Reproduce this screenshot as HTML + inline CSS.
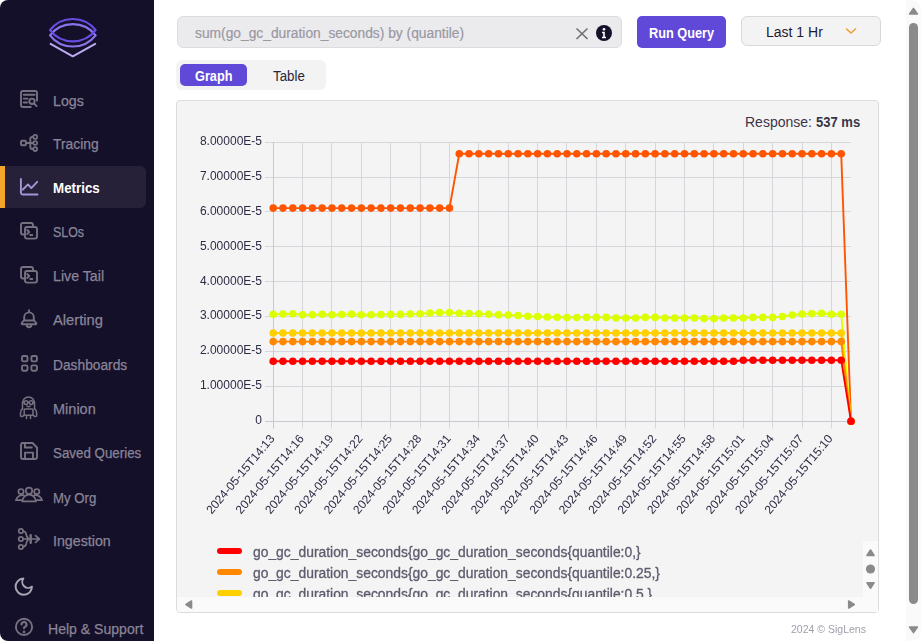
<!DOCTYPE html>
<html><head><meta charset="utf-8">
<style>
*{box-sizing:border-box}
html,body{margin:0;padding:0;width:921px;height:641px;overflow:hidden;background:#fff;font-family:"Liberation Sans",sans-serif}
.abs{position:absolute}
#side{position:absolute;left:0;top:0;width:154px;height:641px;background:#15102a;border-radius:8px 0 0 8px}
.nav{position:absolute;left:52.7px;font-size:15.5px;color:#8a8598;-webkit-text-stroke:0.25px #8a8598;white-space:nowrap;line-height:16px;transform:scaleX(0.872);transform-origin:0 0}
.ico{position:absolute;left:18px;width:22px;height:22px}
.ico *{fill:none;stroke:#7a7585;stroke-width:1.5;stroke-linecap:round;stroke-linejoin:round}
#active{position:absolute;left:5px;top:166px;width:141px;height:42px;background:#262139;border-radius:0 6px 6px 0}
#abar{position:absolute;left:0;top:166px;width:5px;height:42px;background:#f2a72c}
.yl{font-family:"Liberation Sans",sans-serif;font-size:12px;fill:#2e2b45}
.xl{font-family:"Liberation Sans",sans-serif;font-size:12px;fill:#2e2b45}
</style></head><body>
<div id="side">
  <svg class="abs" style="left:0;top:0" width="154" height="70">
    <g fill="none" stroke-width="2.2" stroke-linejoin="round" stroke-linecap="round">
    <path d="M50,35.3 A28.8,28.8 0 0 1 95.6,35.3 A28.8,28.8 0 0 1 50,35.3Z" stroke="#8b74ea"/>
    <path d="M50,30.2 A28.8,28.8 0 0 1 95.6,30.2 A28.8,28.8 0 0 1 50,30.2Z" stroke="#6a4ce4"/>
    <path d="M50.6,43.9 L72.8,56.3 L95.2,43.9" stroke="#bba9f2" stroke-width="2"/>
    </g>
  </svg>
  <div id="abar"></div><div id="active"></div>
  <svg class="abs" style="left:0;top:0" width="154" height="641">
   <g fill="none" stroke="#77717f" stroke-width="1.9" stroke-linecap="round" stroke-linejoin="round">
    <path d="M30.8,107 H23 a2,2 0 0 1 -2,-2 V93 a2,2 0 0 1 2,-2 H35 a2,2 0 0 1 2,2 V100.5"/>
    <path d="M23.8,94.7 H34.6 M23.8,98.6 H27.6 M23.8,102.5 H27"/>
    <circle cx="32" cy="101.3" r="2.7"/><path d="M34.2,103.6 L36.6,106.1"/>
    <rect x="21" y="140.8" width="4.9" height="4.4" rx="1"/>
    <path d="M26,143 H33 M33,136.9 H32.3 a2,2 0 0 0 -2,2 V147 a2,2 0 0 0 2,2 H33"/>
    <circle cx="35.2" cy="136.9" r="1.95" stroke-width="1.7"/><circle cx="35.2" cy="143" r="1.95" stroke-width="1.7"/><circle cx="35.2" cy="149.1" r="1.95" stroke-width="1.7"/>
    <path d="M20.9,179 V192.3 a2,2 0 0 0 2.2,2.2 H37.5 M22.9,189.5 L28,184.4 L31.3,188.1 L37.2,181.8" stroke="#a596d8"/>
    <path d="M25,234.5 H23 a2,2 0 0 1 -2,-2 V225 a2,2 0 0 1 2,-2 H31 a2,2 0 0 1 2,2 V226.8"/>
    <rect x="25" y="227" width="12" height="11.6" rx="2"/>
    <path d="M27.2,230 L29.2,232 L27.2,234 M30.2,235 H32.3"/>
    <path d="M25,278.5 H23 a2,2 0 0 1 -2,-2 V269 a2,2 0 0 1 2,-2 H31 a2,2 0 0 1 2,2 V270.8"/>
    <rect x="25" y="271" width="12" height="11.6" rx="2"/>
    <path d="M27.2,274 L29.2,276 L27.2,278 M30.2,279 H32.3"/>
    <path d="M24.2,320.5 V317.2 a4.8,4.8 0 0 1 9.6,0 V320.5 M23.8,320.5 H34.2 L36.2,323 a0.8,0.8 0 0 1 -0.6,1.3 H22.4 a0.8,0.8 0 0 1 -0.6,-1.3 Z M26.6,324.8 a2.4,2.4 0 0 0 4.8,0 M29,310.2 V311.6"/>
    <rect x="22" y="356" width="5.5" height="5.4" rx="1.4"/><rect x="31.4" y="356" width="5.5" height="5.4" rx="1.4"/>
    <rect x="22" y="365.4" width="5.5" height="5.3" rx="1.4"/><rect x="31.4" y="365.4" width="5.5" height="5.3" rx="1.4"/>
    <path d="M22.5,409 V403 a6,6 0 0 1 12,0 V409" stroke-width="1.5"/>
    <circle cx="26" cy="402.6" r="1.9" stroke-width="1.5"/><circle cx="31.2" cy="402.6" r="1.9" stroke-width="1.5"/>
    <path d="M22.5,402.6 H24.1 M28,402.6 H29.3 M33.1,402.6 H34.5 M27,406 Q28.6,407.5 30.2,406" stroke-width="1.5"/>
    <rect x="24.2" y="409" width="8.8" height="6.2" rx="1" stroke-width="1.5"/>
    <path d="M22.5,409 Q20.3,409.5 20.5,416 M34.5,409 Q36.9,409.5 36.7,416 M20.5,416 Q22,417.5 24.2,415 M36.7,416 Q35.2,417.5 33,415 M26.5,415.5 V418.5 M30.5,415.5 V418.5" stroke-width="1.5"/>
    <path d="M22,443 H32.5 L37,447.5 V457 a2,2 0 0 1 -2,2 H23 a2,2 0 0 1 -2,-2 V445 a2,2 0 0 1 2,-2 Z M24.9,443 V447.5 H31.8 M25,459 V452.6 H33 V459"/>
    <circle cx="29" cy="490.8" r="3.2" stroke-width="1.7"/><circle cx="21" cy="491.6" r="2.6" stroke-width="1.7"/><circle cx="36.8" cy="491.6" r="2.6" stroke-width="1.7"/>
    <path d="M22.3,501.4 a6.8,6.8 0 0 1 13.6,0 Z M21.6,500.2 H15.9 A6.8,6.8 0 0 1 23.6,495.2 M36.6,500.2 H42.1 A6.8,6.8 0 0 0 34.4,495.2" stroke-width="1.7"/>
    <circle cx="20.9" cy="531" r="2.2" stroke-width="1.7"/><circle cx="20.9" cy="539" r="2.2" stroke-width="1.7"/><circle cx="20.9" cy="547" r="2.2" stroke-width="1.7"/>
    <path d="M23,531.5 Q25.5,531 26.3,534.5 Q27,539 30.5,539 M23,546.5 Q25.5,547 26.3,543.5 Q27,539 30.5,539 M23.2,539 H39.4 M35.5,535.6 L39.4,539 L35.5,542.4" stroke-width="1.7"/>
    <path d="M30.7,535.2 V542.8" stroke-width="2.4"/>
    <path d="M23.4,578.4 A8.2,8.2 0 1 0 32,586.6 A6,6 0 0 1 23.4,578.4 Z" stroke="#aaa6b3"/>
    <circle cx="24" cy="626.9" r="8.1"/>
    <path d="M21.5,624.4 a2.5,2.5 0 1 1 3.6,2.3 c-0.7,0.3 -1.1,0.8 -1.1,1.4" stroke-width="2.2"/>
   </g>
   <circle cx="24" cy="631.9" r="1.3" fill="#77717f"/>
  </svg>
  <div class="nav" style="top:92.5px;transform:scaleX(0.918)">Logs</div>
  <div class="nav" style="top:136.2px;transform:scaleX(0.892)">Tracing</div>
  <div class="nav" style="top:180.4px;color:#fff;font-weight:bold;-webkit-text-stroke:0;transform:scaleX(0.862)">Metrics</div>
  <div class="nav" style="top:224.4px;transform:scaleX(0.8)">SLOs</div>
  <div class="nav" style="top:268.4px;transform:scaleX(0.917)">Live Tail</div>
  <div class="nav" style="top:312.4px;transform:scaleX(0.951)">Alerting</div>
  <div class="nav" style="top:356.9px;transform:scaleX(0.888)">Dashboards</div>
  <div class="nav" style="top:401.0px;transform:scaleX(0.936)">Minion</div>
  <div class="nav" style="top:444.8px;transform:scaleX(0.861)">Saved Queries</div>
  <div class="nav" style="top:489.6px;transform:scaleX(0.852)">My Org</div>
  <div class="nav" style="top:533.3px;transform:scaleX(0.918)">Ingestion</div>
  <div class="nav" style="top:621.3px;left:47.8px;transform:scaleX(0.907)">Help &amp; Support</div>
</div>

<!-- search -->
<div class="abs" style="left:177px;top:16px;width:445px;height:32px;background:#ebebee;border:1px solid #dcdce0;border-radius:6px"></div>
<div class="abs" style="left:195px;top:25px;font-size:14px;color:#9a98a2;-webkit-text-stroke:0.2px #9a98a2;white-space:nowrap;line-height:16px;transform:scaleX(0.985);transform-origin:0 0">sum(go_gc_duration_seconds) by (quantile)</div>
<svg class="abs" style="left:574px;top:26px" width="16" height="16" viewBox="0 0 16 16"><path d="M2.5 2.5l11 10.5M13.5 2.5l-11 10.5" stroke="#707070" stroke-width="1.6" fill="none"/></svg>
<svg class="abs" style="left:595px;top:24px" width="18" height="18" viewBox="0 0 18 18"><circle cx="9" cy="9" r="8" fill="#15112a"/><circle cx="9" cy="5.2" r="1.3" fill="#fff"/><path d="M7 7.8h2.8v5h1.2v1.4h-4v-1.4h1.2v-3.6h-1.2z" fill="#fff"/></svg>
<!-- run query -->
<div class="abs" style="left:637px;top:16px;width:89px;height:32px;background:#6048d8;border-radius:5px"></div>
<div class="abs" style="left:649.3px;top:24.5px;font-size:15px;font-weight:bold;color:#fff;white-space:nowrap;line-height:16px;transform:scaleX(0.85);transform-origin:0 0">Run Query</div>
<!-- dropdown -->
<div class="abs" style="left:741px;top:16px;width:140px;height:30px;background:#f3f3f4;border:1px solid #d8d8de;border-radius:6px"></div>
<div class="abs" style="left:766px;top:24px;font-size:14px;color:#1e1a33;white-space:nowrap;line-height:16px">Last 1 Hr</div>
<svg class="abs" style="left:844px;top:26px" width="14" height="10" viewBox="0 0 14 10"><path d="M2 2.5l5 4.5 5-4.5" stroke="#f0a030" stroke-width="1.6" fill="none"/></svg>
<!-- tabs -->
<div class="abs" style="left:176px;top:60px;width:150px;height:30px;background:#f3f3f4;border-radius:6px"></div>
<div class="abs" style="left:180px;top:64px;width:67px;height:22px;background:#6048d8;border-radius:5px"></div>
<div class="abs" style="left:195px;top:68px;font-size:14px;font-weight:bold;color:#fff;white-space:nowrap;line-height:16px;transform:scaleX(0.91);transform-origin:0 0">Graph</div>
<div class="abs" style="left:273px;top:68px;font-size:14px;color:#2a2638;white-space:nowrap;line-height:16px;transform:scaleX(0.95);transform-origin:0 0">Table</div>
<!-- panel -->
<div class="abs" style="left:176px;top:100px;width:703px;height:513px;background:#f4f4f4;border:1px solid #dcdce0;border-radius:4px"></div>
<div class="abs" style="left:745px;top:114px;font-size:14px;color:#3a3548;white-space:nowrap;line-height:16px">Response: <b style="display:inline-block;transform:scaleX(0.93);transform-origin:0 0">537 ms</b></div>
<svg class="abs" style="left:0;top:0;will-change:transform" width="921" height="641" viewBox="0 0 921 641">
<line x1="265" y1="421.50" x2="851.00" y2="421.50" stroke="#d6d6dc" stroke-width="1"/>
<line x1="265" y1="386.50" x2="851.00" y2="386.50" stroke="#d6d6dc" stroke-width="1"/>
<line x1="265" y1="351.50" x2="851.00" y2="351.50" stroke="#d6d6dc" stroke-width="1"/>
<line x1="265" y1="316.50" x2="851.00" y2="316.50" stroke="#d6d6dc" stroke-width="1"/>
<line x1="265" y1="281.50" x2="851.00" y2="281.50" stroke="#d6d6dc" stroke-width="1"/>
<line x1="265" y1="246.50" x2="851.00" y2="246.50" stroke="#d6d6dc" stroke-width="1"/>
<line x1="265" y1="211.50" x2="851.00" y2="211.50" stroke="#d6d6dc" stroke-width="1"/>
<line x1="265" y1="177.50" x2="851.00" y2="177.50" stroke="#d6d6dc" stroke-width="1"/>
<line x1="265" y1="142.50" x2="851.00" y2="142.50" stroke="#d6d6dc" stroke-width="1"/>
<line x1="273.50" y1="142.00" x2="273.50" y2="428.5" stroke="#d6d6dc" stroke-width="1"/>
<line x1="302.50" y1="142.00" x2="302.50" y2="428.5" stroke="#d6d6dc" stroke-width="1"/>
<line x1="331.50" y1="142.00" x2="331.50" y2="428.5" stroke="#d6d6dc" stroke-width="1"/>
<line x1="361.50" y1="142.00" x2="361.50" y2="428.5" stroke="#d6d6dc" stroke-width="1"/>
<line x1="390.50" y1="142.00" x2="390.50" y2="428.5" stroke="#d6d6dc" stroke-width="1"/>
<line x1="420.50" y1="142.00" x2="420.50" y2="428.5" stroke="#d6d6dc" stroke-width="1"/>
<line x1="449.50" y1="142.00" x2="449.50" y2="428.5" stroke="#d6d6dc" stroke-width="1"/>
<line x1="478.50" y1="142.00" x2="478.50" y2="428.5" stroke="#d6d6dc" stroke-width="1"/>
<line x1="508.50" y1="142.00" x2="508.50" y2="428.5" stroke="#d6d6dc" stroke-width="1"/>
<line x1="537.50" y1="142.00" x2="537.50" y2="428.5" stroke="#d6d6dc" stroke-width="1"/>
<line x1="566.50" y1="142.00" x2="566.50" y2="428.5" stroke="#d6d6dc" stroke-width="1"/>
<line x1="596.50" y1="142.00" x2="596.50" y2="428.5" stroke="#d6d6dc" stroke-width="1"/>
<line x1="625.50" y1="142.00" x2="625.50" y2="428.5" stroke="#d6d6dc" stroke-width="1"/>
<line x1="655.50" y1="142.00" x2="655.50" y2="428.5" stroke="#d6d6dc" stroke-width="1"/>
<line x1="684.50" y1="142.00" x2="684.50" y2="428.5" stroke="#d6d6dc" stroke-width="1"/>
<line x1="713.50" y1="142.00" x2="713.50" y2="428.5" stroke="#d6d6dc" stroke-width="1"/>
<line x1="743.50" y1="142.00" x2="743.50" y2="428.5" stroke="#d6d6dc" stroke-width="1"/>
<line x1="772.50" y1="142.00" x2="772.50" y2="428.5" stroke="#d6d6dc" stroke-width="1"/>
<line x1="802.50" y1="142.00" x2="802.50" y2="428.5" stroke="#d6d6dc" stroke-width="1"/>
<line x1="831.50" y1="142.00" x2="831.50" y2="428.5" stroke="#d6d6dc" stroke-width="1"/>
<line x1="273.5" y1="142.00" x2="273.5" y2="428.5" stroke="#c8c8d0" stroke-width="1"/>
<line x1="265" y1="421.5" x2="851.00" y2="421.5" stroke="#c8c8d0" stroke-width="1"/>
<text x="262" y="424.10" text-anchor="end" class="yl">0</text>
<text x="262" y="389.22" text-anchor="end" class="yl">1.00000E-5</text>
<text x="262" y="354.35" text-anchor="end" class="yl">2.00000E-5</text>
<text x="262" y="319.47" text-anchor="end" class="yl">3.00000E-5</text>
<text x="262" y="284.60" text-anchor="end" class="yl">4.00000E-5</text>
<text x="262" y="249.72" text-anchor="end" class="yl">5.00000E-5</text>
<text x="262" y="214.85" text-anchor="end" class="yl">6.00000E-5</text>
<text x="262" y="179.97" text-anchor="end" class="yl">7.00000E-5</text>
<text x="262" y="145.10" text-anchor="end" class="yl">8.00000E-5</text>
<text transform="translate(275.20,439.0) rotate(-50)" text-anchor="end" class="xl">2024-05-15T14:13</text>
<text transform="translate(304.58,439.0) rotate(-50)" text-anchor="end" class="xl">2024-05-15T14:16</text>
<text transform="translate(333.96,439.0) rotate(-50)" text-anchor="end" class="xl">2024-05-15T14:19</text>
<text transform="translate(363.34,439.0) rotate(-50)" text-anchor="end" class="xl">2024-05-15T14:22</text>
<text transform="translate(392.72,439.0) rotate(-50)" text-anchor="end" class="xl">2024-05-15T14:25</text>
<text transform="translate(422.10,439.0) rotate(-50)" text-anchor="end" class="xl">2024-05-15T14:28</text>
<text transform="translate(451.48,439.0) rotate(-50)" text-anchor="end" class="xl">2024-05-15T14:31</text>
<text transform="translate(480.86,439.0) rotate(-50)" text-anchor="end" class="xl">2024-05-15T14:34</text>
<text transform="translate(510.24,439.0) rotate(-50)" text-anchor="end" class="xl">2024-05-15T14:37</text>
<text transform="translate(539.62,439.0) rotate(-50)" text-anchor="end" class="xl">2024-05-15T14:40</text>
<text transform="translate(569.00,439.0) rotate(-50)" text-anchor="end" class="xl">2024-05-15T14:43</text>
<text transform="translate(598.38,439.0) rotate(-50)" text-anchor="end" class="xl">2024-05-15T14:46</text>
<text transform="translate(627.76,439.0) rotate(-50)" text-anchor="end" class="xl">2024-05-15T14:49</text>
<text transform="translate(657.13,439.0) rotate(-50)" text-anchor="end" class="xl">2024-05-15T14:52</text>
<text transform="translate(686.51,439.0) rotate(-50)" text-anchor="end" class="xl">2024-05-15T14:55</text>
<text transform="translate(715.89,439.0) rotate(-50)" text-anchor="end" class="xl">2024-05-15T14:58</text>
<text transform="translate(745.27,439.0) rotate(-50)" text-anchor="end" class="xl">2024-05-15T15:01</text>
<text transform="translate(774.65,439.0) rotate(-50)" text-anchor="end" class="xl">2024-05-15T15:04</text>
<text transform="translate(804.03,439.0) rotate(-50)" text-anchor="end" class="xl">2024-05-15T15:07</text>
<text transform="translate(833.41,439.0) rotate(-50)" text-anchor="end" class="xl">2024-05-15T15:10</text>
<path d="M273.20,208.10 L282.99,208.10 L292.79,208.10 L302.58,208.10 L312.37,208.10 L322.17,208.10 L331.96,208.10 L341.75,208.10 L351.55,208.10 L361.34,208.10 L371.13,208.10 L380.93,208.10 L390.72,208.10 L400.51,208.10 L410.30,208.10 L420.10,208.10 L429.89,208.10 L439.68,208.10 L449.48,208.10 L459.27,153.75 L469.06,153.75 L478.86,153.75 L488.65,153.75 L498.44,153.75 L508.24,153.75 L518.03,153.75 L527.82,153.75 L537.62,153.75 L547.41,153.75 L557.20,153.75 L567.00,153.75 L576.79,153.75 L586.58,153.75 L596.38,153.75 L606.17,153.75 L615.96,153.75 L625.76,153.75 L635.55,153.75 L645.34,153.75 L655.13,153.75 L664.93,153.75 L674.72,153.75 L684.51,153.75 L694.31,153.75 L704.10,153.75 L713.89,153.75 L723.69,153.75 L733.48,153.75 L743.27,153.75 L753.07,153.75 L762.86,153.75 L772.65,153.75 L782.45,153.75 L792.24,153.75 L802.03,153.75 L811.83,153.75 L821.62,153.75 L831.41,153.75 L841.21,153.75 L851.00,421.20" fill="none" stroke="#ff5500" stroke-width="1.9" stroke-linejoin="round"/>
<circle cx="273.20" cy="208.10" r="3.8" fill="#ff5500"/>
<circle cx="282.99" cy="208.10" r="3.8" fill="#ff5500"/>
<circle cx="292.79" cy="208.10" r="3.8" fill="#ff5500"/>
<circle cx="302.58" cy="208.10" r="3.8" fill="#ff5500"/>
<circle cx="312.37" cy="208.10" r="3.8" fill="#ff5500"/>
<circle cx="322.17" cy="208.10" r="3.8" fill="#ff5500"/>
<circle cx="331.96" cy="208.10" r="3.8" fill="#ff5500"/>
<circle cx="341.75" cy="208.10" r="3.8" fill="#ff5500"/>
<circle cx="351.55" cy="208.10" r="3.8" fill="#ff5500"/>
<circle cx="361.34" cy="208.10" r="3.8" fill="#ff5500"/>
<circle cx="371.13" cy="208.10" r="3.8" fill="#ff5500"/>
<circle cx="380.93" cy="208.10" r="3.8" fill="#ff5500"/>
<circle cx="390.72" cy="208.10" r="3.8" fill="#ff5500"/>
<circle cx="400.51" cy="208.10" r="3.8" fill="#ff5500"/>
<circle cx="410.30" cy="208.10" r="3.8" fill="#ff5500"/>
<circle cx="420.10" cy="208.10" r="3.8" fill="#ff5500"/>
<circle cx="429.89" cy="208.10" r="3.8" fill="#ff5500"/>
<circle cx="439.68" cy="208.10" r="3.8" fill="#ff5500"/>
<circle cx="449.48" cy="208.10" r="3.8" fill="#ff5500"/>
<circle cx="459.27" cy="153.75" r="3.8" fill="#ff5500"/>
<circle cx="469.06" cy="153.75" r="3.8" fill="#ff5500"/>
<circle cx="478.86" cy="153.75" r="3.8" fill="#ff5500"/>
<circle cx="488.65" cy="153.75" r="3.8" fill="#ff5500"/>
<circle cx="498.44" cy="153.75" r="3.8" fill="#ff5500"/>
<circle cx="508.24" cy="153.75" r="3.8" fill="#ff5500"/>
<circle cx="518.03" cy="153.75" r="3.8" fill="#ff5500"/>
<circle cx="527.82" cy="153.75" r="3.8" fill="#ff5500"/>
<circle cx="537.62" cy="153.75" r="3.8" fill="#ff5500"/>
<circle cx="547.41" cy="153.75" r="3.8" fill="#ff5500"/>
<circle cx="557.20" cy="153.75" r="3.8" fill="#ff5500"/>
<circle cx="567.00" cy="153.75" r="3.8" fill="#ff5500"/>
<circle cx="576.79" cy="153.75" r="3.8" fill="#ff5500"/>
<circle cx="586.58" cy="153.75" r="3.8" fill="#ff5500"/>
<circle cx="596.38" cy="153.75" r="3.8" fill="#ff5500"/>
<circle cx="606.17" cy="153.75" r="3.8" fill="#ff5500"/>
<circle cx="615.96" cy="153.75" r="3.8" fill="#ff5500"/>
<circle cx="625.76" cy="153.75" r="3.8" fill="#ff5500"/>
<circle cx="635.55" cy="153.75" r="3.8" fill="#ff5500"/>
<circle cx="645.34" cy="153.75" r="3.8" fill="#ff5500"/>
<circle cx="655.13" cy="153.75" r="3.8" fill="#ff5500"/>
<circle cx="664.93" cy="153.75" r="3.8" fill="#ff5500"/>
<circle cx="674.72" cy="153.75" r="3.8" fill="#ff5500"/>
<circle cx="684.51" cy="153.75" r="3.8" fill="#ff5500"/>
<circle cx="694.31" cy="153.75" r="3.8" fill="#ff5500"/>
<circle cx="704.10" cy="153.75" r="3.8" fill="#ff5500"/>
<circle cx="713.89" cy="153.75" r="3.8" fill="#ff5500"/>
<circle cx="723.69" cy="153.75" r="3.8" fill="#ff5500"/>
<circle cx="733.48" cy="153.75" r="3.8" fill="#ff5500"/>
<circle cx="743.27" cy="153.75" r="3.8" fill="#ff5500"/>
<circle cx="753.07" cy="153.75" r="3.8" fill="#ff5500"/>
<circle cx="762.86" cy="153.75" r="3.8" fill="#ff5500"/>
<circle cx="772.65" cy="153.75" r="3.8" fill="#ff5500"/>
<circle cx="782.45" cy="153.75" r="3.8" fill="#ff5500"/>
<circle cx="792.24" cy="153.75" r="3.8" fill="#ff5500"/>
<circle cx="802.03" cy="153.75" r="3.8" fill="#ff5500"/>
<circle cx="811.83" cy="153.75" r="3.8" fill="#ff5500"/>
<circle cx="821.62" cy="153.75" r="3.8" fill="#ff5500"/>
<circle cx="831.41" cy="153.75" r="3.8" fill="#ff5500"/>
<circle cx="841.21" cy="153.75" r="3.8" fill="#ff5500"/>
<circle cx="851.00" cy="421.20" r="3.8" fill="#ff5500"/>
<path d="M273.20,314.30 L282.99,314.00 L292.79,313.70 L302.58,314.70 L312.37,314.70 L322.17,314.20 L331.96,314.70 L341.75,314.50 L351.55,314.10 L361.34,314.70 L371.13,314.70 L380.93,314.50 L390.72,314.40 L400.51,314.40 L410.30,314.00 L420.10,313.80 L429.89,313.00 L439.68,312.50 L449.48,312.50 L459.27,313.20 L469.06,313.50 L478.86,313.80 L488.65,314.30 L498.44,314.80 L508.24,315.00 L518.03,315.50 L527.82,316.20 L537.62,316.60 L547.41,317.00 L557.20,317.30 L567.00,317.50 L576.79,317.50 L586.58,317.40 L596.38,317.40 L606.17,317.40 L615.96,318.00 L625.76,318.00 L635.55,318.00 L645.34,317.40 L655.13,317.40 L664.93,318.00 L674.72,318.00 L684.51,318.00 L694.31,318.00 L704.10,318.60 L713.89,318.60 L723.69,318.00 L733.48,318.00 L743.27,318.00 L753.07,317.40 L762.86,317.40 L772.65,317.40 L782.45,316.50 L792.24,315.00 L802.03,314.00 L811.83,313.60 L821.62,313.30 L831.41,314.30 L841.21,314.30 L851.00,421.20" fill="none" stroke="#dcff00" stroke-width="1.9" stroke-linejoin="round"/>
<circle cx="273.20" cy="314.30" r="3.8" fill="#dcff00"/>
<circle cx="282.99" cy="314.00" r="3.8" fill="#dcff00"/>
<circle cx="292.79" cy="313.70" r="3.8" fill="#dcff00"/>
<circle cx="302.58" cy="314.70" r="3.8" fill="#dcff00"/>
<circle cx="312.37" cy="314.70" r="3.8" fill="#dcff00"/>
<circle cx="322.17" cy="314.20" r="3.8" fill="#dcff00"/>
<circle cx="331.96" cy="314.70" r="3.8" fill="#dcff00"/>
<circle cx="341.75" cy="314.50" r="3.8" fill="#dcff00"/>
<circle cx="351.55" cy="314.10" r="3.8" fill="#dcff00"/>
<circle cx="361.34" cy="314.70" r="3.8" fill="#dcff00"/>
<circle cx="371.13" cy="314.70" r="3.8" fill="#dcff00"/>
<circle cx="380.93" cy="314.50" r="3.8" fill="#dcff00"/>
<circle cx="390.72" cy="314.40" r="3.8" fill="#dcff00"/>
<circle cx="400.51" cy="314.40" r="3.8" fill="#dcff00"/>
<circle cx="410.30" cy="314.00" r="3.8" fill="#dcff00"/>
<circle cx="420.10" cy="313.80" r="3.8" fill="#dcff00"/>
<circle cx="429.89" cy="313.00" r="3.8" fill="#dcff00"/>
<circle cx="439.68" cy="312.50" r="3.8" fill="#dcff00"/>
<circle cx="449.48" cy="312.50" r="3.8" fill="#dcff00"/>
<circle cx="459.27" cy="313.20" r="3.8" fill="#dcff00"/>
<circle cx="469.06" cy="313.50" r="3.8" fill="#dcff00"/>
<circle cx="478.86" cy="313.80" r="3.8" fill="#dcff00"/>
<circle cx="488.65" cy="314.30" r="3.8" fill="#dcff00"/>
<circle cx="498.44" cy="314.80" r="3.8" fill="#dcff00"/>
<circle cx="508.24" cy="315.00" r="3.8" fill="#dcff00"/>
<circle cx="518.03" cy="315.50" r="3.8" fill="#dcff00"/>
<circle cx="527.82" cy="316.20" r="3.8" fill="#dcff00"/>
<circle cx="537.62" cy="316.60" r="3.8" fill="#dcff00"/>
<circle cx="547.41" cy="317.00" r="3.8" fill="#dcff00"/>
<circle cx="557.20" cy="317.30" r="3.8" fill="#dcff00"/>
<circle cx="567.00" cy="317.50" r="3.8" fill="#dcff00"/>
<circle cx="576.79" cy="317.50" r="3.8" fill="#dcff00"/>
<circle cx="586.58" cy="317.40" r="3.8" fill="#dcff00"/>
<circle cx="596.38" cy="317.40" r="3.8" fill="#dcff00"/>
<circle cx="606.17" cy="317.40" r="3.8" fill="#dcff00"/>
<circle cx="615.96" cy="318.00" r="3.8" fill="#dcff00"/>
<circle cx="625.76" cy="318.00" r="3.8" fill="#dcff00"/>
<circle cx="635.55" cy="318.00" r="3.8" fill="#dcff00"/>
<circle cx="645.34" cy="317.40" r="3.8" fill="#dcff00"/>
<circle cx="655.13" cy="317.40" r="3.8" fill="#dcff00"/>
<circle cx="664.93" cy="318.00" r="3.8" fill="#dcff00"/>
<circle cx="674.72" cy="318.00" r="3.8" fill="#dcff00"/>
<circle cx="684.51" cy="318.00" r="3.8" fill="#dcff00"/>
<circle cx="694.31" cy="318.00" r="3.8" fill="#dcff00"/>
<circle cx="704.10" cy="318.60" r="3.8" fill="#dcff00"/>
<circle cx="713.89" cy="318.60" r="3.8" fill="#dcff00"/>
<circle cx="723.69" cy="318.00" r="3.8" fill="#dcff00"/>
<circle cx="733.48" cy="318.00" r="3.8" fill="#dcff00"/>
<circle cx="743.27" cy="318.00" r="3.8" fill="#dcff00"/>
<circle cx="753.07" cy="317.40" r="3.8" fill="#dcff00"/>
<circle cx="762.86" cy="317.40" r="3.8" fill="#dcff00"/>
<circle cx="772.65" cy="317.40" r="3.8" fill="#dcff00"/>
<circle cx="782.45" cy="316.50" r="3.8" fill="#dcff00"/>
<circle cx="792.24" cy="315.00" r="3.8" fill="#dcff00"/>
<circle cx="802.03" cy="314.00" r="3.8" fill="#dcff00"/>
<circle cx="811.83" cy="313.60" r="3.8" fill="#dcff00"/>
<circle cx="821.62" cy="313.30" r="3.8" fill="#dcff00"/>
<circle cx="831.41" cy="314.30" r="3.8" fill="#dcff00"/>
<circle cx="841.21" cy="314.30" r="3.8" fill="#dcff00"/>
<circle cx="851.00" cy="421.20" r="3.8" fill="#dcff00"/>
<path d="M273.20,333.00 L282.99,333.00 L292.79,333.00 L302.58,333.00 L312.37,333.00 L322.17,333.00 L331.96,333.00 L341.75,333.00 L351.55,333.00 L361.34,333.00 L371.13,333.00 L380.93,333.00 L390.72,333.00 L400.51,333.00 L410.30,333.00 L420.10,333.00 L429.89,333.00 L439.68,333.00 L449.48,333.00 L459.27,333.00 L469.06,333.00 L478.86,333.00 L488.65,333.00 L498.44,333.00 L508.24,333.00 L518.03,333.00 L527.82,333.00 L537.62,333.00 L547.41,333.00 L557.20,333.00 L567.00,333.00 L576.79,333.00 L586.58,333.00 L596.38,333.00 L606.17,333.00 L615.96,333.00 L625.76,333.00 L635.55,333.00 L645.34,333.00 L655.13,333.00 L664.93,333.00 L674.72,333.00 L684.51,333.00 L694.31,333.00 L704.10,333.00 L713.89,333.00 L723.69,333.00 L733.48,333.00 L743.27,333.00 L753.07,333.00 L762.86,333.00 L772.65,333.00 L782.45,333.00 L792.24,333.00 L802.03,333.00 L811.83,333.00 L821.62,333.00 L831.41,333.00 L841.21,333.00 L851.00,421.20" fill="none" stroke="#ffd000" stroke-width="1.9" stroke-linejoin="round"/>
<circle cx="273.20" cy="333.00" r="3.8" fill="#ffd000"/>
<circle cx="282.99" cy="333.00" r="3.8" fill="#ffd000"/>
<circle cx="292.79" cy="333.00" r="3.8" fill="#ffd000"/>
<circle cx="302.58" cy="333.00" r="3.8" fill="#ffd000"/>
<circle cx="312.37" cy="333.00" r="3.8" fill="#ffd000"/>
<circle cx="322.17" cy="333.00" r="3.8" fill="#ffd000"/>
<circle cx="331.96" cy="333.00" r="3.8" fill="#ffd000"/>
<circle cx="341.75" cy="333.00" r="3.8" fill="#ffd000"/>
<circle cx="351.55" cy="333.00" r="3.8" fill="#ffd000"/>
<circle cx="361.34" cy="333.00" r="3.8" fill="#ffd000"/>
<circle cx="371.13" cy="333.00" r="3.8" fill="#ffd000"/>
<circle cx="380.93" cy="333.00" r="3.8" fill="#ffd000"/>
<circle cx="390.72" cy="333.00" r="3.8" fill="#ffd000"/>
<circle cx="400.51" cy="333.00" r="3.8" fill="#ffd000"/>
<circle cx="410.30" cy="333.00" r="3.8" fill="#ffd000"/>
<circle cx="420.10" cy="333.00" r="3.8" fill="#ffd000"/>
<circle cx="429.89" cy="333.00" r="3.8" fill="#ffd000"/>
<circle cx="439.68" cy="333.00" r="3.8" fill="#ffd000"/>
<circle cx="449.48" cy="333.00" r="3.8" fill="#ffd000"/>
<circle cx="459.27" cy="333.00" r="3.8" fill="#ffd000"/>
<circle cx="469.06" cy="333.00" r="3.8" fill="#ffd000"/>
<circle cx="478.86" cy="333.00" r="3.8" fill="#ffd000"/>
<circle cx="488.65" cy="333.00" r="3.8" fill="#ffd000"/>
<circle cx="498.44" cy="333.00" r="3.8" fill="#ffd000"/>
<circle cx="508.24" cy="333.00" r="3.8" fill="#ffd000"/>
<circle cx="518.03" cy="333.00" r="3.8" fill="#ffd000"/>
<circle cx="527.82" cy="333.00" r="3.8" fill="#ffd000"/>
<circle cx="537.62" cy="333.00" r="3.8" fill="#ffd000"/>
<circle cx="547.41" cy="333.00" r="3.8" fill="#ffd000"/>
<circle cx="557.20" cy="333.00" r="3.8" fill="#ffd000"/>
<circle cx="567.00" cy="333.00" r="3.8" fill="#ffd000"/>
<circle cx="576.79" cy="333.00" r="3.8" fill="#ffd000"/>
<circle cx="586.58" cy="333.00" r="3.8" fill="#ffd000"/>
<circle cx="596.38" cy="333.00" r="3.8" fill="#ffd000"/>
<circle cx="606.17" cy="333.00" r="3.8" fill="#ffd000"/>
<circle cx="615.96" cy="333.00" r="3.8" fill="#ffd000"/>
<circle cx="625.76" cy="333.00" r="3.8" fill="#ffd000"/>
<circle cx="635.55" cy="333.00" r="3.8" fill="#ffd000"/>
<circle cx="645.34" cy="333.00" r="3.8" fill="#ffd000"/>
<circle cx="655.13" cy="333.00" r="3.8" fill="#ffd000"/>
<circle cx="664.93" cy="333.00" r="3.8" fill="#ffd000"/>
<circle cx="674.72" cy="333.00" r="3.8" fill="#ffd000"/>
<circle cx="684.51" cy="333.00" r="3.8" fill="#ffd000"/>
<circle cx="694.31" cy="333.00" r="3.8" fill="#ffd000"/>
<circle cx="704.10" cy="333.00" r="3.8" fill="#ffd000"/>
<circle cx="713.89" cy="333.00" r="3.8" fill="#ffd000"/>
<circle cx="723.69" cy="333.00" r="3.8" fill="#ffd000"/>
<circle cx="733.48" cy="333.00" r="3.8" fill="#ffd000"/>
<circle cx="743.27" cy="333.00" r="3.8" fill="#ffd000"/>
<circle cx="753.07" cy="333.00" r="3.8" fill="#ffd000"/>
<circle cx="762.86" cy="333.00" r="3.8" fill="#ffd000"/>
<circle cx="772.65" cy="333.00" r="3.8" fill="#ffd000"/>
<circle cx="782.45" cy="333.00" r="3.8" fill="#ffd000"/>
<circle cx="792.24" cy="333.00" r="3.8" fill="#ffd000"/>
<circle cx="802.03" cy="333.00" r="3.8" fill="#ffd000"/>
<circle cx="811.83" cy="333.00" r="3.8" fill="#ffd000"/>
<circle cx="821.62" cy="333.00" r="3.8" fill="#ffd000"/>
<circle cx="831.41" cy="333.00" r="3.8" fill="#ffd000"/>
<circle cx="841.21" cy="333.00" r="3.8" fill="#ffd000"/>
<circle cx="851.00" cy="421.20" r="3.8" fill="#ffd000"/>
<path d="M273.20,341.60 L282.99,341.60 L292.79,341.60 L302.58,341.60 L312.37,341.60 L322.17,341.60 L331.96,341.60 L341.75,341.60 L351.55,341.60 L361.34,341.60 L371.13,341.60 L380.93,341.60 L390.72,341.60 L400.51,341.60 L410.30,341.60 L420.10,341.60 L429.89,341.60 L439.68,341.60 L449.48,341.60 L459.27,341.60 L469.06,341.60 L478.86,341.60 L488.65,341.60 L498.44,341.60 L508.24,341.60 L518.03,341.60 L527.82,341.60 L537.62,341.60 L547.41,341.60 L557.20,341.60 L567.00,341.60 L576.79,341.60 L586.58,341.60 L596.38,341.60 L606.17,341.60 L615.96,341.60 L625.76,341.60 L635.55,341.60 L645.34,341.60 L655.13,341.60 L664.93,341.60 L674.72,341.60 L684.51,341.60 L694.31,341.60 L704.10,341.60 L713.89,341.60 L723.69,341.60 L733.48,341.60 L743.27,341.60 L753.07,341.60 L762.86,341.60 L772.65,341.60 L782.45,341.60 L792.24,341.60 L802.03,341.60 L811.83,341.60 L821.62,341.60 L831.41,341.60 L841.21,341.60 L851.00,421.20" fill="none" stroke="#ff8800" stroke-width="1.9" stroke-linejoin="round"/>
<circle cx="273.20" cy="341.60" r="3.8" fill="#ff8800"/>
<circle cx="282.99" cy="341.60" r="3.8" fill="#ff8800"/>
<circle cx="292.79" cy="341.60" r="3.8" fill="#ff8800"/>
<circle cx="302.58" cy="341.60" r="3.8" fill="#ff8800"/>
<circle cx="312.37" cy="341.60" r="3.8" fill="#ff8800"/>
<circle cx="322.17" cy="341.60" r="3.8" fill="#ff8800"/>
<circle cx="331.96" cy="341.60" r="3.8" fill="#ff8800"/>
<circle cx="341.75" cy="341.60" r="3.8" fill="#ff8800"/>
<circle cx="351.55" cy="341.60" r="3.8" fill="#ff8800"/>
<circle cx="361.34" cy="341.60" r="3.8" fill="#ff8800"/>
<circle cx="371.13" cy="341.60" r="3.8" fill="#ff8800"/>
<circle cx="380.93" cy="341.60" r="3.8" fill="#ff8800"/>
<circle cx="390.72" cy="341.60" r="3.8" fill="#ff8800"/>
<circle cx="400.51" cy="341.60" r="3.8" fill="#ff8800"/>
<circle cx="410.30" cy="341.60" r="3.8" fill="#ff8800"/>
<circle cx="420.10" cy="341.60" r="3.8" fill="#ff8800"/>
<circle cx="429.89" cy="341.60" r="3.8" fill="#ff8800"/>
<circle cx="439.68" cy="341.60" r="3.8" fill="#ff8800"/>
<circle cx="449.48" cy="341.60" r="3.8" fill="#ff8800"/>
<circle cx="459.27" cy="341.60" r="3.8" fill="#ff8800"/>
<circle cx="469.06" cy="341.60" r="3.8" fill="#ff8800"/>
<circle cx="478.86" cy="341.60" r="3.8" fill="#ff8800"/>
<circle cx="488.65" cy="341.60" r="3.8" fill="#ff8800"/>
<circle cx="498.44" cy="341.60" r="3.8" fill="#ff8800"/>
<circle cx="508.24" cy="341.60" r="3.8" fill="#ff8800"/>
<circle cx="518.03" cy="341.60" r="3.8" fill="#ff8800"/>
<circle cx="527.82" cy="341.60" r="3.8" fill="#ff8800"/>
<circle cx="537.62" cy="341.60" r="3.8" fill="#ff8800"/>
<circle cx="547.41" cy="341.60" r="3.8" fill="#ff8800"/>
<circle cx="557.20" cy="341.60" r="3.8" fill="#ff8800"/>
<circle cx="567.00" cy="341.60" r="3.8" fill="#ff8800"/>
<circle cx="576.79" cy="341.60" r="3.8" fill="#ff8800"/>
<circle cx="586.58" cy="341.60" r="3.8" fill="#ff8800"/>
<circle cx="596.38" cy="341.60" r="3.8" fill="#ff8800"/>
<circle cx="606.17" cy="341.60" r="3.8" fill="#ff8800"/>
<circle cx="615.96" cy="341.60" r="3.8" fill="#ff8800"/>
<circle cx="625.76" cy="341.60" r="3.8" fill="#ff8800"/>
<circle cx="635.55" cy="341.60" r="3.8" fill="#ff8800"/>
<circle cx="645.34" cy="341.60" r="3.8" fill="#ff8800"/>
<circle cx="655.13" cy="341.60" r="3.8" fill="#ff8800"/>
<circle cx="664.93" cy="341.60" r="3.8" fill="#ff8800"/>
<circle cx="674.72" cy="341.60" r="3.8" fill="#ff8800"/>
<circle cx="684.51" cy="341.60" r="3.8" fill="#ff8800"/>
<circle cx="694.31" cy="341.60" r="3.8" fill="#ff8800"/>
<circle cx="704.10" cy="341.60" r="3.8" fill="#ff8800"/>
<circle cx="713.89" cy="341.60" r="3.8" fill="#ff8800"/>
<circle cx="723.69" cy="341.60" r="3.8" fill="#ff8800"/>
<circle cx="733.48" cy="341.60" r="3.8" fill="#ff8800"/>
<circle cx="743.27" cy="341.60" r="3.8" fill="#ff8800"/>
<circle cx="753.07" cy="341.60" r="3.8" fill="#ff8800"/>
<circle cx="762.86" cy="341.60" r="3.8" fill="#ff8800"/>
<circle cx="772.65" cy="341.60" r="3.8" fill="#ff8800"/>
<circle cx="782.45" cy="341.60" r="3.8" fill="#ff8800"/>
<circle cx="792.24" cy="341.60" r="3.8" fill="#ff8800"/>
<circle cx="802.03" cy="341.60" r="3.8" fill="#ff8800"/>
<circle cx="811.83" cy="341.60" r="3.8" fill="#ff8800"/>
<circle cx="821.62" cy="341.60" r="3.8" fill="#ff8800"/>
<circle cx="831.41" cy="341.60" r="3.8" fill="#ff8800"/>
<circle cx="841.21" cy="341.60" r="3.8" fill="#ff8800"/>
<circle cx="851.00" cy="421.20" r="3.8" fill="#ff8800"/>
<path d="M273.20,361.30 L282.99,361.30 L292.79,361.30 L302.58,361.30 L312.37,361.30 L322.17,361.30 L331.96,361.30 L341.75,361.30 L351.55,361.30 L361.34,361.30 L371.13,361.30 L380.93,361.30 L390.72,361.30 L400.51,361.30 L410.30,361.30 L420.10,361.30 L429.89,361.30 L439.68,361.30 L449.48,361.30 L459.27,361.30 L469.06,361.30 L478.86,361.30 L488.65,361.30 L498.44,361.30 L508.24,361.30 L518.03,361.30 L527.82,361.30 L537.62,361.30 L547.41,361.30 L557.20,361.30 L567.00,361.30 L576.79,361.30 L586.58,361.30 L596.38,361.30 L606.17,361.30 L615.96,361.30 L625.76,361.30 L635.55,361.30 L645.34,361.30 L655.13,361.30 L664.93,361.30 L674.72,361.30 L684.51,361.30 L694.31,361.30 L704.10,361.30 L713.89,361.30 L723.69,361.30 L733.48,361.30 L743.27,360.20 L753.07,360.20 L762.86,360.20 L772.65,360.20 L782.45,360.20 L792.24,360.20 L802.03,360.20 L811.83,360.20 L821.62,360.20 L831.41,360.20 L841.21,360.20 L851.00,421.20" fill="none" stroke="#ff0000" stroke-width="1.9" stroke-linejoin="round"/>
<circle cx="273.20" cy="361.30" r="3.8" fill="#ff0000"/>
<circle cx="282.99" cy="361.30" r="3.8" fill="#ff0000"/>
<circle cx="292.79" cy="361.30" r="3.8" fill="#ff0000"/>
<circle cx="302.58" cy="361.30" r="3.8" fill="#ff0000"/>
<circle cx="312.37" cy="361.30" r="3.8" fill="#ff0000"/>
<circle cx="322.17" cy="361.30" r="3.8" fill="#ff0000"/>
<circle cx="331.96" cy="361.30" r="3.8" fill="#ff0000"/>
<circle cx="341.75" cy="361.30" r="3.8" fill="#ff0000"/>
<circle cx="351.55" cy="361.30" r="3.8" fill="#ff0000"/>
<circle cx="361.34" cy="361.30" r="3.8" fill="#ff0000"/>
<circle cx="371.13" cy="361.30" r="3.8" fill="#ff0000"/>
<circle cx="380.93" cy="361.30" r="3.8" fill="#ff0000"/>
<circle cx="390.72" cy="361.30" r="3.8" fill="#ff0000"/>
<circle cx="400.51" cy="361.30" r="3.8" fill="#ff0000"/>
<circle cx="410.30" cy="361.30" r="3.8" fill="#ff0000"/>
<circle cx="420.10" cy="361.30" r="3.8" fill="#ff0000"/>
<circle cx="429.89" cy="361.30" r="3.8" fill="#ff0000"/>
<circle cx="439.68" cy="361.30" r="3.8" fill="#ff0000"/>
<circle cx="449.48" cy="361.30" r="3.8" fill="#ff0000"/>
<circle cx="459.27" cy="361.30" r="3.8" fill="#ff0000"/>
<circle cx="469.06" cy="361.30" r="3.8" fill="#ff0000"/>
<circle cx="478.86" cy="361.30" r="3.8" fill="#ff0000"/>
<circle cx="488.65" cy="361.30" r="3.8" fill="#ff0000"/>
<circle cx="498.44" cy="361.30" r="3.8" fill="#ff0000"/>
<circle cx="508.24" cy="361.30" r="3.8" fill="#ff0000"/>
<circle cx="518.03" cy="361.30" r="3.8" fill="#ff0000"/>
<circle cx="527.82" cy="361.30" r="3.8" fill="#ff0000"/>
<circle cx="537.62" cy="361.30" r="3.8" fill="#ff0000"/>
<circle cx="547.41" cy="361.30" r="3.8" fill="#ff0000"/>
<circle cx="557.20" cy="361.30" r="3.8" fill="#ff0000"/>
<circle cx="567.00" cy="361.30" r="3.8" fill="#ff0000"/>
<circle cx="576.79" cy="361.30" r="3.8" fill="#ff0000"/>
<circle cx="586.58" cy="361.30" r="3.8" fill="#ff0000"/>
<circle cx="596.38" cy="361.30" r="3.8" fill="#ff0000"/>
<circle cx="606.17" cy="361.30" r="3.8" fill="#ff0000"/>
<circle cx="615.96" cy="361.30" r="3.8" fill="#ff0000"/>
<circle cx="625.76" cy="361.30" r="3.8" fill="#ff0000"/>
<circle cx="635.55" cy="361.30" r="3.8" fill="#ff0000"/>
<circle cx="645.34" cy="361.30" r="3.8" fill="#ff0000"/>
<circle cx="655.13" cy="361.30" r="3.8" fill="#ff0000"/>
<circle cx="664.93" cy="361.30" r="3.8" fill="#ff0000"/>
<circle cx="674.72" cy="361.30" r="3.8" fill="#ff0000"/>
<circle cx="684.51" cy="361.30" r="3.8" fill="#ff0000"/>
<circle cx="694.31" cy="361.30" r="3.8" fill="#ff0000"/>
<circle cx="704.10" cy="361.30" r="3.8" fill="#ff0000"/>
<circle cx="713.89" cy="361.30" r="3.8" fill="#ff0000"/>
<circle cx="723.69" cy="361.30" r="3.8" fill="#ff0000"/>
<circle cx="733.48" cy="361.30" r="3.8" fill="#ff0000"/>
<circle cx="743.27" cy="360.20" r="3.8" fill="#ff0000"/>
<circle cx="753.07" cy="360.20" r="3.8" fill="#ff0000"/>
<circle cx="762.86" cy="360.20" r="3.8" fill="#ff0000"/>
<circle cx="772.65" cy="360.20" r="3.8" fill="#ff0000"/>
<circle cx="782.45" cy="360.20" r="3.8" fill="#ff0000"/>
<circle cx="792.24" cy="360.20" r="3.8" fill="#ff0000"/>
<circle cx="802.03" cy="360.20" r="3.8" fill="#ff0000"/>
<circle cx="811.83" cy="360.20" r="3.8" fill="#ff0000"/>
<circle cx="821.62" cy="360.20" r="3.8" fill="#ff0000"/>
<circle cx="831.41" cy="360.20" r="3.8" fill="#ff0000"/>
<circle cx="841.21" cy="360.20" r="3.8" fill="#ff0000"/>
<circle cx="851.00" cy="421.20" r="3.8" fill="#ff0000"/>
</svg>
<!-- legend -->
<div class="abs" style="left:178px;top:541px;width:685px;height:56px;overflow:hidden">
  <div class="abs" style="left:39px;top:7px;width:25px;height:6px;border-radius:3px;background:#ff0000"></div>
  <div class="abs" style="left:75px;top:3px;font-size:14px;color:#5f5a6d;-webkit-text-stroke:0.3px #5f5a6d;white-space:nowrap;line-height:16px;transform:scaleX(0.99);transform-origin:0 0">go_gc_duration_seconds{go_gc_duration_seconds{quantile:0,}</div>
  <div class="abs" style="left:39px;top:28px;width:25px;height:6px;border-radius:3px;background:#ff8800"></div>
  <div class="abs" style="left:75px;top:24px;font-size:14px;color:#5f5a6d;-webkit-text-stroke:0.3px #5f5a6d;white-space:nowrap;line-height:16px;transform:scaleX(0.99);transform-origin:0 0">go_gc_duration_seconds{go_gc_duration_seconds{quantile:0.25,}</div>
  <div class="abs" style="left:39px;top:49px;width:25px;height:6px;border-radius:3px;background:#ffd000"></div>
  <div class="abs" style="left:75px;top:45px;font-size:14px;color:#5f5a6d;-webkit-text-stroke:0.3px #5f5a6d;white-space:nowrap;line-height:16px;transform:scaleX(0.99);transform-origin:0 0">go_gc_duration_seconds{go_gc_duration_seconds{quantile:0.5,}</div>
</div>
<!-- legend scrollbars -->
<div class="abs" style="left:863px;top:541px;width:15px;height:71px;background:#fafafa"></div>
<div class="abs" style="left:177px;top:597px;width:701px;height:15px;background:#fafafa;border-radius:0 0 3px 3px"></div>
<svg class="abs" style="left:0;top:0" width="921" height="641">
  <g fill="#8a8a8a" stroke="#8a8a8a" stroke-width="1.6" stroke-linejoin="round">
  <path d="M867,555.5 L870.5,550 L874,555.5Z"/>
  <path d="M867,582.7 L870.5,588.2 L874,582.7Z"/>
  <path d="M191.5,601 L186,604.5 L191.5,608Z"/>
  <path d="M848.7,601 L854.2,604.5 L848.7,608Z"/>
  </g>
  <circle cx="870.5" cy="569" r="4.6" fill="#8a8a8a"/>
</svg>
<!-- footer -->
<div class="abs" style="left:790.5px;top:623px;font-size:11px;color:#a19dab;white-space:nowrap;line-height:12px;transform:scaleX(0.955);transform-origin:0 0">2024 © SigLens</div>
<!-- page scrollbar -->
<div class="abs" style="left:906px;top:0;width:15px;height:641px;background:#fafafa;border-radius:0 9px 9px 0"></div>
<svg class="abs" style="left:906px;top:0" width="15" height="641">
  <path d="M3.6,14 L7.5,8.4 L11.4,14Z" fill="#8a8a8a" stroke="#8a8a8a" stroke-width="1.6" stroke-linejoin="round"/>
  <rect x="3" y="23" width="9" height="581" rx="4.5" fill="#8a8a8a"/>
  <path d="M3.6,627 L7.5,632.6 L11.4,627Z" fill="#8a8a8a" stroke="#8a8a8a" stroke-width="1.6" stroke-linejoin="round"/>
</svg>
</body></html>
